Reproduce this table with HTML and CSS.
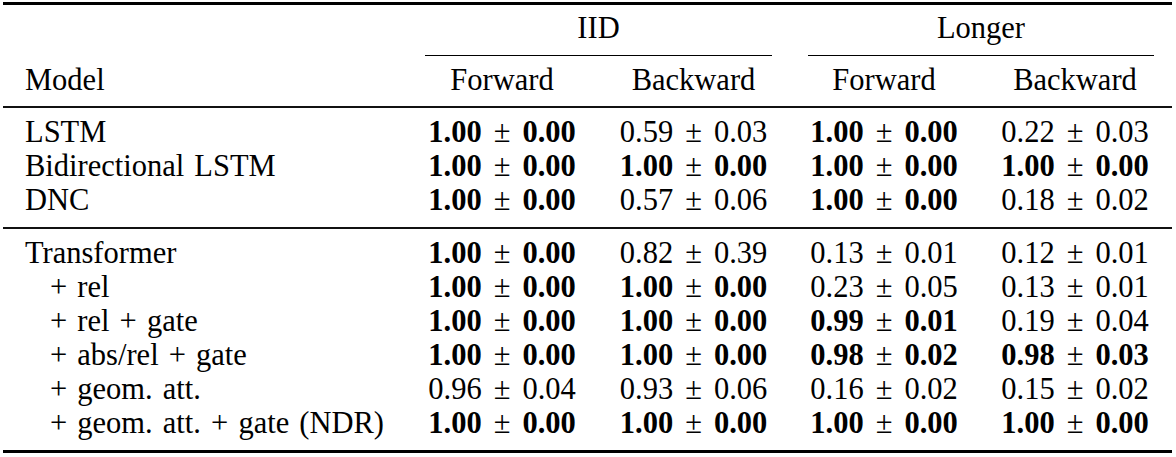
FILE: index.html
```html
<!DOCTYPE html>
<html>
<head>
<meta charset="utf-8">
<link rel="stylesheet" href="styles.css">
</head>
<body>
<div class="tbl">
  <div class="rule rule-top"></div>

  <div class="cell"></div>
  <div class="cell grp">IID</div>
  <div class="cell grp">Longer</div>
  <div class="cmid cmid-a"></div>
  <div class="cmid cmid-b"></div>

  <div class="cell name">Model</div>
  <div class="cell num">Forward</div>
  <div class="cell num">Backward</div>
  <div class="cell num">Forward</div>
  <div class="cell num">Backward</div>

  <div class="rule rule-mid"></div>

  <div class="cell name">LSTM</div>
  <div class="cell num"><b>1.00</b><span class="pm">±</span><b>0.00</b></div>
  <div class="cell num">0.59<span class="pm">±</span>0.03</div>
  <div class="cell num"><b>1.00</b><span class="pm">±</span><b>0.00</b></div>
  <div class="cell num">0.22<span class="pm">±</span>0.03</div>

  <div class="cell name">Bidirectional LSTM</div>
  <div class="cell num"><b>1.00</b><span class="pm">±</span><b>0.00</b></div>
  <div class="cell num"><b>1.00</b><span class="pm">±</span><b>0.00</b></div>
  <div class="cell num"><b>1.00</b><span class="pm">±</span><b>0.00</b></div>
  <div class="cell num"><b>1.00</b><span class="pm">±</span><b>0.00</b></div>

  <div class="cell name">DNC</div>
  <div class="cell num"><b>1.00</b><span class="pm">±</span><b>0.00</b></div>
  <div class="cell num">0.57<span class="pm">±</span>0.06</div>
  <div class="cell num"><b>1.00</b><span class="pm">±</span><b>0.00</b></div>
  <div class="cell num">0.18<span class="pm">±</span>0.02</div>

  <div class="rule rule-mid"></div>

  <div class="cell name">Transformer</div>
  <div class="cell num"><b>1.00</b><span class="pm">±</span><b>0.00</b></div>
  <div class="cell num">0.82<span class="pm">±</span>0.39</div>
  <div class="cell num">0.13<span class="pm">±</span>0.01</div>
  <div class="cell num">0.12<span class="pm">±</span>0.01</div>

  <div class="cell name sub">+ rel</div>
  <div class="cell num"><b>1.00</b><span class="pm">±</span><b>0.00</b></div>
  <div class="cell num"><b>1.00</b><span class="pm">±</span><b>0.00</b></div>
  <div class="cell num">0.23<span class="pm">±</span>0.05</div>
  <div class="cell num">0.13<span class="pm">±</span>0.01</div>

  <div class="cell name sub">+ rel + gate</div>
  <div class="cell num"><b>1.00</b><span class="pm">±</span><b>0.00</b></div>
  <div class="cell num"><b>1.00</b><span class="pm">±</span><b>0.00</b></div>
  <div class="cell num"><b>0.99</b><span class="pm">±</span><b>0.01</b></div>
  <div class="cell num">0.19<span class="pm">±</span>0.04</div>

  <div class="cell name sub">+ abs/rel + gate</div>
  <div class="cell num"><b>1.00</b><span class="pm">±</span><b>0.00</b></div>
  <div class="cell num"><b>1.00</b><span class="pm">±</span><b>0.00</b></div>
  <div class="cell num"><b>0.98</b><span class="pm">±</span><b>0.02</b></div>
  <div class="cell num"><b>0.98</b><span class="pm">±</span><b>0.03</b></div>

  <div class="cell name sub">+ geom. att.</div>
  <div class="cell num">0.96<span class="pm">±</span>0.04</div>
  <div class="cell num">0.93<span class="pm">±</span>0.06</div>
  <div class="cell num">0.16<span class="pm">±</span>0.02</div>
  <div class="cell num">0.15<span class="pm">±</span>0.02</div>

  <div class="cell name sub">+ geom. att. + gate (NDR)</div>
  <div class="cell num"><b>1.00</b><span class="pm">±</span><b>0.00</b></div>
  <div class="cell num"><b>1.00</b><span class="pm">±</span><b>0.00</b></div>
  <div class="cell num"><b>1.00</b><span class="pm">±</span><b>0.00</b></div>
  <div class="cell num"><b>1.00</b><span class="pm">±</span><b>0.00</b></div>

  <div class="rule rule-bottom"></div>
</div>
</body>
</html>
```
FILE: styles.css
```css
html, body {
  margin: 0;
  padding: 0;
  background: #fff;
}
body {
  font-family: "Liberation Serif", "Times New Roman", serif;
  font-size: 30.5px;
  color: #000;
}
.tbl {
  display: grid;
  grid-template-columns: 404px 190px 193px 188px 194px;
  width: 1170px;
  margin: 2px 0 0 3px;
}
.cell {
  line-height: 34px;
  white-space: nowrap;
}
.name {
  padding-left: 22px;
  word-spacing: 2.5px;
}
.name.sub {
  padding-left: 47px;
}
.num {
  text-align: center;
}
.grp {
  grid-column: span 2;
  text-align: center;
}
.pm {
  font-weight: normal;
  margin: 0 12px;
}
b {
  font-weight: bold;
}
.rule {
  grid-column: 1 / -1;
  background: #000;
}
.rule-top {
  height: 3px;
  margin-bottom: 6px;
}
.rule-mid {
  height: 2px;
  margin-top: 9px;
  margin-bottom: 7px;
  background: #111;
}
.rule-mid ~ .rule-mid {
  margin-top: 10px;
}
.rule-bottom {
  height: 3px;
  margin-top: 10px;
}
.cmid {
  height: 1px;
  background: #000;
  margin: 10px 18px 7px 18px;
}
.cmid-a {
  grid-column: 2 / 4;
}
.cmid-b {
  grid-column: 4 / 6;
}
```
